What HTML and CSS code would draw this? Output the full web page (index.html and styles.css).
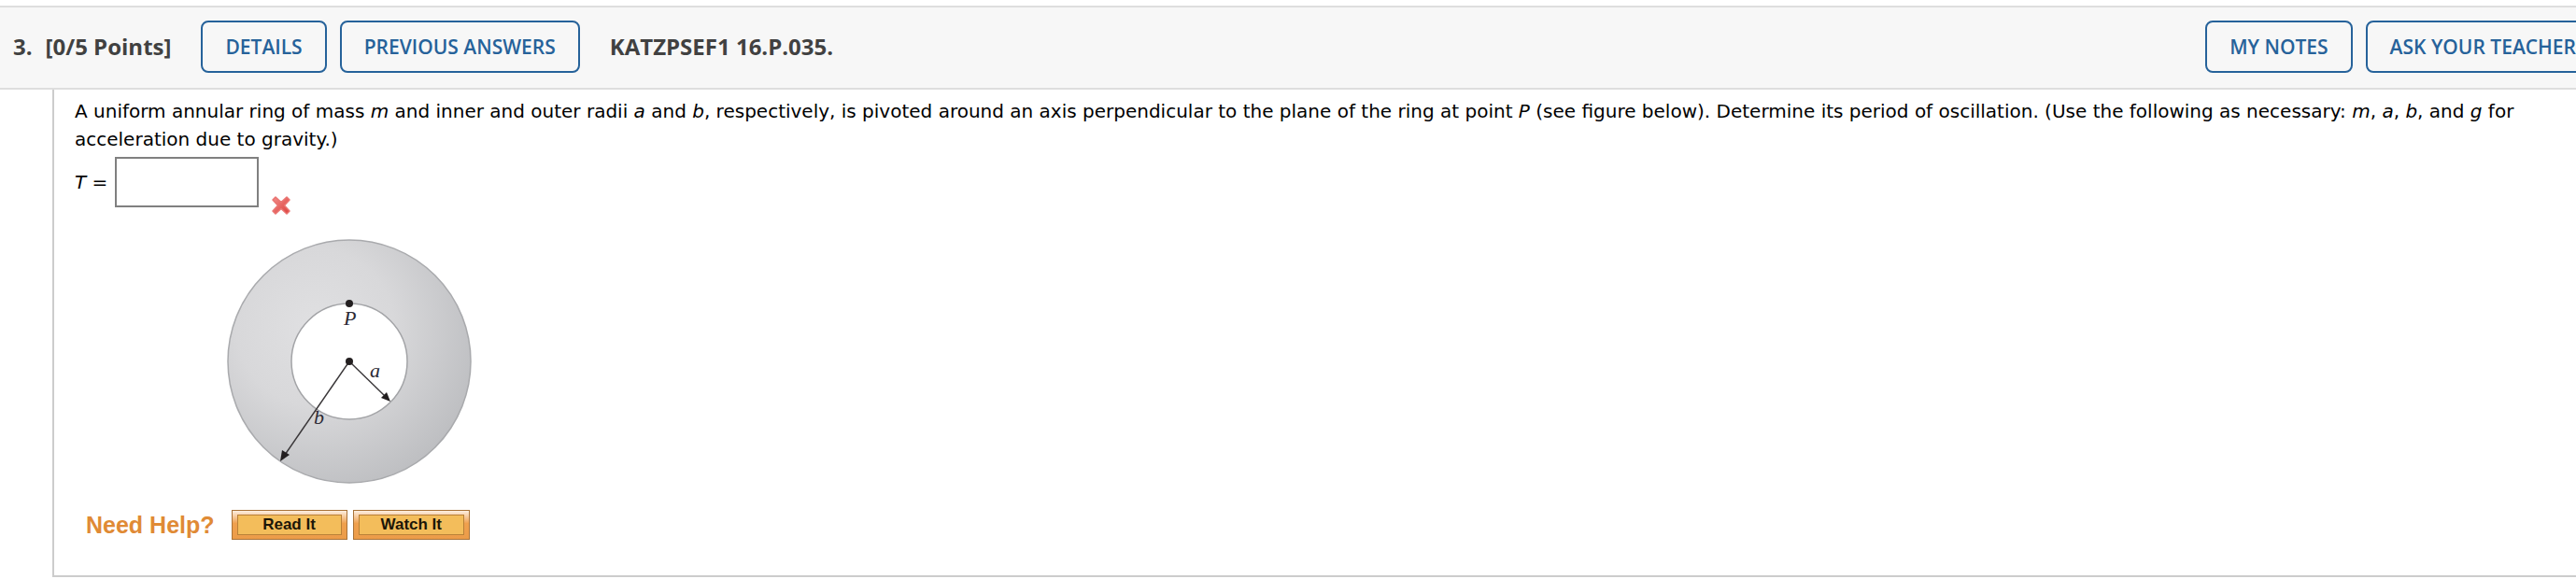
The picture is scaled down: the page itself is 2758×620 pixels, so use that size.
FILE: index.html
```html
<!DOCTYPE html>
<html lang="en">
<head>
    <meta charset="UTF-8">
    <meta name="viewport" content="width=device-width, initial-scale=1.0">
    <title>KATZPSEF1 16.P.035.</title>
    <link rel="stylesheet" href="styles.css">
</head>
<body>
    <!-- Question header -->
    <header class="question-header">
        <span class="question-number">3.</span>
        <span class="question-points">[0/5 Points]</span>
        <button type="button" class="header-button">DETAILS</button>
        <button type="button" class="header-button">PREVIOUS ANSWERS</button>
        <h1 class="question-name">KATZPSEF1 16.P.035.</h1>
        <div class="header-actions">
            <button type="button" class="header-button">MY NOTES</button>
            <button type="button" class="header-button">ASK YOUR TEACHER</button>
        </div>
    </header>

    <!-- Question body -->
    <main class="question-body">
        <p class="question-text">
            A uniform annular ring of mass <i>m</i> and inner and outer radii <i>a</i> and <i>b</i>, respectively, is pivoted around an axis perpendicular to the plane of the ring at point <i>P</i> (see figure below). Determine its period of oscillation. (Use the following as necessary: <i>m</i>, <i>a</i>, <i>b</i>, and <i>g</i> for acceleration due to gravity.)
        </p>

        <div class="answer-row">
            <label for="answer"><i>T</i> =</label>
            <input type="text" id="answer" name="answer" class="answer-input" />
            <svg class="wrong-icon" viewBox="0 0 20 20" role="img" aria-label="Incorrect">
                <defs>
                    <linearGradient id="wrongFill" x1="0" y1="0" x2="1" y2="1">
                        <stop offset="0" stop-color="#f28d8a" />
                        <stop offset="1" stop-color="#dc403c" />
                    </linearGradient>
                </defs>
                <path d="M4 1 L10 6.500 L16 1 L19 4 L13.500 10 L19 16 L16 19 L10 13.500 L4 19 L1 16 L6.500 10 L1 4 Z" fill="url(#wrongFill)" stroke="#ea7471" stroke-width="1.500" stroke-linejoin="round" />
            </svg>
        </div>

        <svg class="figure" viewBox="0 0 264 264" role="img" aria-label="Annular ring with inner radius a and outer radius b">
            <defs>
                <radialGradient id="ringFill" cx="0.36" cy="0.36" r="0.72">
                    <stop offset="0" stop-color="#e0e0e2" />
                    <stop offset="0.45" stop-color="#d8d8da" />
                    <stop offset="1" stop-color="#bcbdc0" />
                </radialGradient>
            </defs>
            <circle cx="132" cy="132" r="130" fill="url(#ringFill)" stroke="#a9aaad" stroke-width="1.500" />
            <circle cx="132" cy="132" r="62" fill="#fff" stroke="#a3a4a7" stroke-width="1.500" />
            <g stroke="#3a3739" stroke-width="1.400" fill="#231f20">
                <path d="M132 132 L170 169" />
                <path d="M132 132 L63 232" />
                <path d="M176 175 L166 171 L172 165 Z" stroke="none" />
                <path d="M58 239 L60 227 L68 232 Z" stroke="none" />
                <circle cx="132" cy="70" r="4" stroke="none" />
                <circle cx="132" cy="132" r="4" stroke="none" />
            </g>
            <g class="figure-label">
                <text x="126" y="93">P</text>
                <text x="154" y="149">a</text>
                <text x="94" y="199">b</text>
            </g>
        </svg>

        <!-- Help links -->
        <div class="help-row">
            <span class="help-title">Need Help?</span>
            <button type="button" class="help-button"><span>Read It</span></button>
            <button type="button" class="help-button"><span>Watch It</span></button>
        </div>
    </main>
</body>
</html>
```
FILE: styles.css
```css
* {
    box-sizing: border-box;
}

body {
    margin: 0;
    padding-top: 6px;
    background: #fff;
    color: #000;
    font-family: Verdana, "DejaVu Sans", sans-serif;
    font-size: 20px;
    line-height: 30px;
    overflow-x: hidden;
}

/* Question header */
.question-header {
    display: flex;
    align-items: center;
    gap: 14px;
    margin-right: -26px;
    padding: 14px 0 16px 14px;
    background: #f7f7f7;
    border-top: 2px solid #dedede;
    border-bottom: 2px solid #dedede;
    color: #414141;
    font-family: "Open Sans", sans-serif;
    font-size: 24px;
    font-weight: 700;
    white-space: nowrap;
}

.question-points {
    margin-right: 18px;
}

.question-name {
    margin: 0 0 0 18px;
    font-size: 24px;
}

.header-button {
    height: 56px;
    padding: 0 24px;
    background: transparent;
    border: 2px solid #26629a;
    border-radius: 8px;
    color: #26629a;
    font-family: "Open Sans", sans-serif;
    font-size: 21px;
    font-weight: 600;
    cursor: pointer;
}

.header-actions {
    display: flex;
    gap: 14px;
    margin-left: auto;
}

/* Question body */
.question-body {
    margin-left: 56px;
    padding: 8px 22px 38px;
    border-left: 2px solid #ccc;
    border-bottom: 2px solid #ccc;
}

.question-text {
    margin: 0;
}

.answer-row {
    display: flex;
    align-items: center;
    margin-top: 4px;
}

.answer-input {
    width: 154px;
    height: 54px;
    margin-left: 8px;
    padding: 4px;
    border: 2px solid #808080;
    font: inherit;
}

.wrong-icon {
    align-self: flex-end;
    width: 20px;
    height: 20px;
    margin: 0 0 -8px 14px;
}

.figure {
    display: block;
    width: 264px;
    margin: 33px 0 27px 162px;
}

.figure-label {
    fill: #2c2a35;
    font-family: "Liberation Serif", serif;
    font-size: 22px;
    font-style: italic;
}

/* Help links */
.help-row {
    display: flex;
    align-items: center;
    gap: 6px;
    padding-left: 12px;
    font-family: Arial, "Liberation Sans", sans-serif;
    font-weight: 700;
}

.help-title {
    margin-right: 12px;
    color: #e08a35;
    font-size: 25px;
}

.help-button {
    min-width: 124px;
    height: 32px;
    padding: 4px 5px;
    background: linear-gradient(#fdeee0, #efa04e 45%, #ec9c49);
    border: 1px solid #a87238;
    font-family: inherit;
    font-size: 17px;
    font-weight: 700;
    cursor: pointer;
}

.help-button span {
    display: block;
    padding: 0 23px;
    background: #f3bd5b;
    border: 1px solid #b98138;
    color: #1c1608;
    line-height: 20px;
}
```
